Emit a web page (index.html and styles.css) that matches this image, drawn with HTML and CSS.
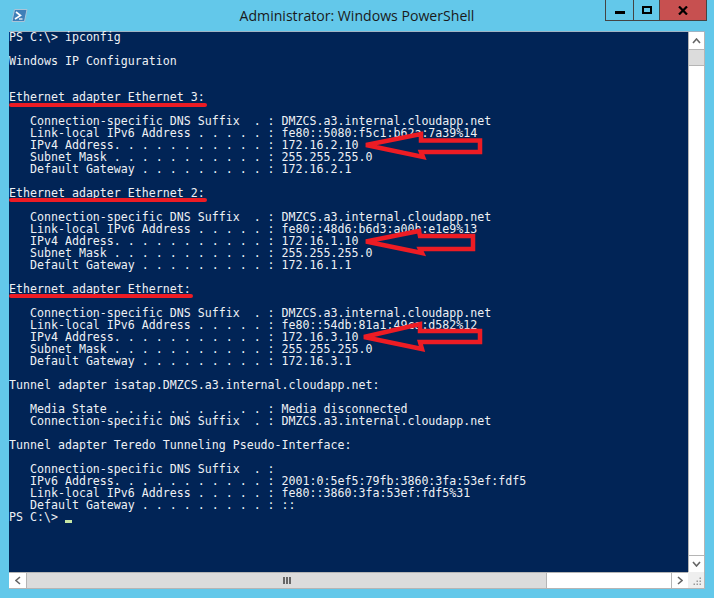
FILE: index.html
```html
<!DOCTYPE html>
<html lang="en">
<head>
<meta charset="utf-8">
<title>Administrator: Windows PowerShell</title>
<link rel="stylesheet" href="styles.css">
</head>
<body>
<div class="window">
  <header class="titlebar">
    <svg class="app-icon" width="17" height="15" viewBox="0 0 17 15">
      <path d="M3.500 1.500H16L13.500 13.500H1Z" fill="#3f7fb8" stroke="#a9c4d8"/>
      <path d="M5 4L9.500 7.500L4 11" fill="none" stroke="#fff" stroke-width="1.600"/>
      <path d="M8 11H11.500" stroke="#fff" stroke-width="1.200"/>
    </svg>
    <div class="title">Administrator: Windows PowerShell</div>
    <div class="controls">
      <div class="ctl ctl-min"><span class="min-glyph"></span></div>
      <div class="ctl ctl-max"><span class="max-glyph"></span></div>
      <div class="ctl ctl-close">
        <svg width="10" height="9" viewBox="0 0 10 9"><path d="M1 0.500L9 8.500M9 0.500L1 8.500" stroke="#000" stroke-width="2.200" fill="none"/></svg>
      </div>
    </div>
  </header>
  <div class="client">
    <div class="upper">
      <main class="console">
<pre class="output">PS C:\&gt; ipconfig

Windows IP Configuration


Ethernet adapter Ethernet 3:

   Connection-specific DNS Suffix  . : DMZCS.a3.internal.cloudapp.net
   Link-local IPv6 Address . . . . . : fe80::5080:f5c1:b62a:7a39%14
   IPv4 Address. . . . . . . . . . . : 172.16.2.10
   Subnet Mask . . . . . . . . . . . : 255.255.255.0
   Default Gateway . . . . . . . . . : 172.16.2.1

Ethernet adapter Ethernet 2:

   Connection-specific DNS Suffix  . : DMZCS.a3.internal.cloudapp.net
   Link-local IPv6 Address . . . . . : fe80::48d6:b6d3:a00b:e1e9%13
   IPv4 Address. . . . . . . . . . . : 172.16.1.10
   Subnet Mask . . . . . . . . . . . : 255.255.255.0
   Default Gateway . . . . . . . . . : 172.16.1.1

Ethernet adapter Ethernet:

   Connection-specific DNS Suffix  . : DMZCS.a3.internal.cloudapp.net
   Link-local IPv6 Address . . . . . : fe80::54db:81a1:49ca:d582%12
   IPv4 Address. . . . . . . . . . . : 172.16.3.10
   Subnet Mask . . . . . . . . . . . : 255.255.255.0
   Default Gateway . . . . . . . . . : 172.16.3.1

Tunnel adapter isatap.DMZCS.a3.internal.cloudapp.net:

   Media State . . . . . . . . . . . : Media disconnected
   Connection-specific DNS Suffix  . : DMZCS.a3.internal.cloudapp.net

Tunnel adapter Teredo Tunneling Pseudo-Interface:

   Connection-specific DNS Suffix  . :
   IPv6 Address. . . . . . . . . . . : 2001:0:5ef5:79fb:3860:3fa:53ef:fdf5
   Link-local IPv6 Address . . . . . : fe80::3860:3fa:53ef:fdf5%31
   Default Gateway . . . . . . . . . : ::
PS C:\&gt; <span class="cursor"></span></pre>
        <svg class="marks" width="679" height="540" viewBox="9 32 679 540">
          <g class="underlines">
            <path d="M11 105H205"/>
            <path d="M11 200H205"/>
            <path d="M11 296H191"/>
          </g>
          <g class="arrows">
            <path d="M366 145L421 134V140.500H480V152H421L423 157Z"/>
            <path d="M366 241.500L419 231L420 236H473V249H420L422 253Z"/>
            <path d="M364 337L420 324V331H480V342H420L422 349Z"/>
          </g>
        </svg>
      </main>
      <aside class="vscroll">
        <div class="sbtn">
          <svg width="9" height="6" viewBox="0 0 9 6"><path d="M1 5L4.500 1L8 5" fill="none" stroke="#666" stroke-width="1.600"/></svg>
        </div>
        <div class="vthumb"></div>
        <div class="vtrack"></div>
        <div class="sbtn sbtn-down">
          <svg width="9" height="6" viewBox="0 0 9 6"><path d="M1 1L4.500 5L8 1" fill="none" stroke="#666" stroke-width="1.600"/></svg>
        </div>
      </aside>
    </div>
    <div class="lower">
      <div class="hscroll">
        <div class="sbtn hbtn">
          <svg width="6" height="9" viewBox="0 0 6 9"><path d="M5 1L1 4.500L5 8" fill="none" stroke="#666" stroke-width="1.600"/></svg>
        </div>
        <div class="hthumb"><span class="grip"></span></div>
        <div class="htrack"></div>
        <div class="sbtn hbtn hbtn-right">
          <svg width="6" height="9" viewBox="0 0 6 9"><path d="M1 1L5 4.500L1 8" fill="none" stroke="#666" stroke-width="1.600"/></svg>
        </div>
      </div>
      <div class="corner">
        <svg width="9" height="9" viewBox="0 0 9 9" fill="#9a9a9a">
          <rect x="6.500" y="0.500" width="1.500" height="1.500"/>
          <rect x="3.500" y="3.500" width="1.500" height="1.500"/><rect x="6.500" y="3.500" width="1.500" height="1.500"/>
          <rect x="0.500" y="6.500" width="1.500" height="1.500"/><rect x="3.500" y="6.500" width="1.500" height="1.500"/><rect x="6.500" y="6.500" width="1.500" height="1.500"/>
        </svg>
      </div>
    </div>
  </div>
</div>
</body>
</html>
```

FILE: styles.css
```css
* { box-sizing: border-box; }
html, body { margin: 0; padding: 0; height: 100%; }
body { background: #63c8ea; overflow: hidden; }
.window { width: 714px; height: 598px; display: flex; flex-direction: column; padding: 0 9px 9px 9px; background: #63c8ea; }
.titlebar { height: 31px; flex: none; display: flex; position: relative; }
.app-icon { position: absolute; left: 2px; top: 8px; }
.title { position: absolute; left: 0; right: 0; top: 6px; text-align: center; font: 14.1px/20px "Open Sans", sans-serif; color: #1a1a1a; }
.controls { position: absolute; right: -2px; top: 0; display: flex; height: 21px; border: 1px solid #444; border-top: 0; }
.ctl { display: flex; align-items: center; justify-content: center; height: 20px; }
.ctl-min { width: 28px; border-right: 1px solid #444; }
.ctl-max { width: 26px; border-right: 1px solid #444; }
.ctl-close { width: 46px; background: #c75050; }
.min-glyph { width: 10px; height: 3px; background: #000; margin-top: 5px; }
.max-glyph { width: 10px; height: 8px; border: 2px solid #000; }
.client { flex: 1; display: flex; flex-direction: column; border-top: 1px solid #9fb4c4; min-height: 0; }
.upper { flex: 1; display: flex; min-height: 0; }
.console { flex: 1; background: #012456; position: relative; }
.output { margin: -1px 0 0; font: 11.62px/12px "DejaVu Sans Mono", monospace; color: #eef1f5; white-space: pre; }
.cursor { display: inline-block; width: 7px; height: 3px; background: #c6e6a4; vertical-align: -2px; }
.marks { position: absolute; left: 0; top: 0; }
.underlines path { stroke: #ed1c24; stroke-width: 4; stroke-linecap: round; fill: none; }
.arrows path { stroke: #ed1c24; stroke-width: 4.500; fill: none; stroke-linejoin: miter; }
.vscroll { width: 17px; display: flex; flex-direction: column; background: #fff; border-right: 1px solid #b5b5b5; border-left: 1px solid #b5b5b5; }
.sbtn { width: 100%; height: 17px; flex: none; display: flex; align-items: center; justify-content: center; background: #fff; }
.sbtn-down { border-top: 1px solid #b5b5b5; }
.vthumb { height: 17px; flex: none; background: #dcdcdc; border-top: 1px solid #b5b5b5; border-bottom: 1px solid #b5b5b5; }
.vtrack { flex: 1; background: #fff; }
.lower { height: 17px; flex: none; display: flex; }
.hscroll { flex: 1; display: flex; border-top: 1px solid #b5b5b5; border-bottom: 1px solid #b5b5b5; background: #fff; }
.hbtn { width: 17px; height: 100%; }
.hbtn-right { border-left: 1px solid #b5b5b5; }
.hthumb { width: 521px; flex: none; background: #dcdcdc; border-left: 1px solid #b5b5b5; border-right: 1px solid #b5b5b5; display: flex; align-items: center; justify-content: center; }
.grip { width: 8px; height: 7px; background: repeating-linear-gradient(90deg, #666 0 2px, transparent 2px 3px); }
.htrack { flex: 1; }
.corner { width: 17px; background: #efefef; border-bottom: 1px solid #b5b5b5; border-right: 1px solid #b5b5b5; display: flex; align-items: flex-end; justify-content: flex-end; padding: 0 2px 2px 0; }
```
